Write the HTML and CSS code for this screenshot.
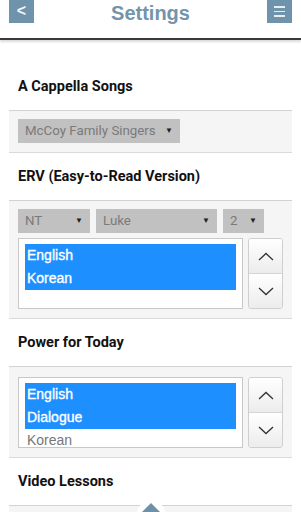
FILE: index.html
```html
<html>
    <head>
        <title>Settings</title>
        <link rel="stylesheet" href="styles.css">
    </head>

    <body>
        <!-- Header -->
        <div class="topbar">
            <a class="barbtn" href="#back">&lt;</a>
            <div class="title">Settings</div>
            <a class="barbtn menu" href="#menu">
                <span></span><span></span><span></span>
            </a>
        </div>

        <!-- Contents -->
        <div class="content">
            <div class="heading">A Cappella Songs</div>
            <div class="panel">
                <div class="selects">
                    <div class="pick w-singers">McCoy Family Singers<span class="arrow">&#9660;</span></div>
                </div>
            </div>

            <div class="heading">ERV (Easy-to-Read Version)</div>
            <div class="panel">
                <div class="selects">
                    <div class="pick w-testament">NT<span class="arrow">&#9660;</span></div>
                    <div class="pick w-book">Luke<span class="arrow">&#9660;</span></div>
                    <div class="pick w-chapter">2<span class="arrow">&#9660;</span></div>
                </div>
                <div class="listrow">
                    <div class="listbox">
                        <div class="opt on">English</div>
                        <div class="opt on">Korean</div>
                    </div>
                    <div class="updown">
                        <div class="ud">
                            <svg width="16" height="9" viewBox="0 0 16 9"><path d="M1 8 L8 1.5 L15 8" fill="none" stroke="#333" stroke-width="1.3"/></svg>
                        </div>
                        <div class="ud">
                            <svg width="16" height="9" viewBox="0 0 16 9"><path d="M1 1 L8 7.5 L15 1" fill="none" stroke="#333" stroke-width="1.3"/></svg>
                        </div>
                    </div>
                </div>
            </div>

            <div class="heading">Power for Today</div>
            <div class="panel">
                <div class="listrow">
                    <div class="listbox">
                        <div class="opt on">English</div>
                        <div class="opt on">Dialogue</div>
                        <div class="opt">Korean</div>
                    </div>
                    <div class="updown">
                        <div class="ud">
                            <svg width="16" height="9" viewBox="0 0 16 9"><path d="M1 8 L8 1.5 L15 8" fill="none" stroke="#333" stroke-width="1.3"/></svg>
                        </div>
                        <div class="ud">
                            <svg width="16" height="9" viewBox="0 0 16 9"><path d="M1 1 L8 7.5 L15 1" fill="none" stroke="#333" stroke-width="1.3"/></svg>
                        </div>
                    </div>
                </div>
            </div>

            <div class="heading">Video Lessons</div>
            <div class="panel">
                <div class="selects">
                    <div class="pick w-video"></div>
                    <div class="pick w-video2"></div>
                </div>
            </div>
        </div>

        <!-- Scroll to top -->
        <a class="totop" href="#top">
            <svg width="18" height="9" viewBox="0 0 18 9"><path d="M0 9 L9 0 L18 9 Z" fill="#6e91a9"/></svg>
        </a>
    </body>
</html>
```

FILE: styles.css
```css
body {
    margin: 0;
    background-color: white;
    font-family: 'Liberation Sans', Arial, sans-serif;
    overflow: hidden;
}

/* Header */
.topbar {
    height: 38px;
    display: flex;
    justify-content: space-between;
    align-items: flex-start;
    padding: 0 9px;
    border-bottom: 2px solid #3a3a3a;
    box-shadow: 0 2px 2px #dcdcdc;
    position: relative;
    z-index: 1;
}
.barbtn {
    width: 25px;
    height: 23px;
    background-color: #6f93ab;
    color: #f4f7f9;
    text-decoration: none;
    font-size: 16px;
    font-weight: bold;
    line-height: 21px;
    text-align: center;
}
.menu {
    display: flex;
    flex-direction: column;
    justify-content: center;
    align-items: center;
    gap: 3px;
}
.menu span {
    width: 11px;
    height: 1.5px;
    background-color: #e6edf2;
}
.title {
    font-size: 20px;
    font-weight: bold;
    color: #7294ac;
    line-height: 24px;
    padding-top: 1px;
}

/* Sections */
.content {
    padding: 23px 9px 0;
}
.heading {
    height: 47px;
    line-height: 47px;
    padding-left: 9px;
    font-family: Roboto, sans-serif;
    font-weight: bold;
    font-size: 14.5px;
    color: #111;
}
.panel {
    background-color: #f5f5f5;
    border-top: 1px solid #d2d2d2;
    border-bottom: 1px solid #dadada;
    padding: 8px 9px 9px;
}

/* Drop downs */
.selects {
    display: flex;
    gap: 6px;
}
.pick {
    height: 24px;
    line-height: 24px;
    background-color: #c1c1c1;
    color: #7a7a7a;
    font-family: Roboto, sans-serif;
    font-size: 13.3px;
    padding-left: 7px;
    box-sizing: border-box;
    display: flex;
    justify-content: space-between;
}
.arrow {
    color: #222;
    font-size: 8px;
    padding-right: 7px;
}
.w-singers { width: 162px; }
.w-testament { width: 72px; }
.w-book { width: 121px; }
.w-chapter { width: 41px; }
.w-video { width: 115px; }
.w-video2 { width: 34px; margin-left: 27px; }

/* List boxes */
.listrow {
    display: flex;
    gap: 5px;
    margin-top: 5px;
}
.panel > .listrow:first-child {
    margin-top: 2px;
}
.listbox {
    width: 225px;
    height: 71px;
    box-sizing: border-box;
    background-color: white;
    border: 1px solid #c8c8c8;
    padding: 5px 6px;
    overflow: hidden;
}
.opt {
    height: 23px;
    line-height: 23px;
    padding-left: 2px;
    font-size: 14px;
    color: #777;
}
.opt.on {
    background-color: #1e8fff;
    color: white;
    -webkit-text-stroke: 0.35px white;
}
.updown {
    width: 35px;
    height: 71px;
    box-sizing: border-box;
    border: 1px solid #cfcfcf;
    border-radius: 3px;
    display: flex;
    flex-direction: column;
    overflow: hidden;
}
.ud {
    flex: 1;
    display: flex;
    align-items: center;
    justify-content: center;
    background: linear-gradient(#ffffff, #ececec);
}
.ud + .ud {
    border-top: 1px solid #d4d4d4;
}

/* Scroll to top */
.totop {
    position: fixed;
    left: 137px;
    bottom: -16px;
    width: 28px;
    height: 28px;
    border-radius: 50%;
    background-color: white;
    display: flex;
    justify-content: center;
    padding-top: 3px;
    box-sizing: border-box;
}
```
